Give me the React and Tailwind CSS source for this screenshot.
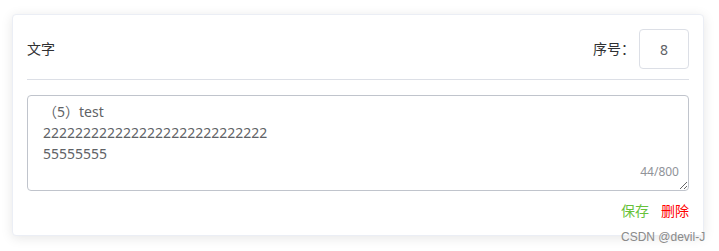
import React from "react";

export default function App() {
  const value = "（5）test\n2222222222222222222222222222\n55555555";
  return (
    <div
      className="relative w-[719px] h-[251px] bg-white"
      style={{ fontFamily: '"Noto Sans", "Noto Sans CJK SC", sans-serif' }}
    >
      <div className="pt-[14px] pl-[12px]">
        <div className="w-[692px] h-[222px] bg-white rounded-[4px] border border-[#ebeef5] shadow-[0_2px_12px_0_rgba(0,0,0,0.1)] px-[14px] pt-[14px] flex flex-col">
          <div className="flex items-center justify-between h-[40px]">
            <span className="text-[14px] text-[#303133] leading-[20px]">文字</span>
            <div className="flex items-center gap-[4px]">
              <span className="text-[14px] text-[#303133] leading-[20px]">序号：</span>
              <div className="w-[50px] h-[40px] border border-[#dcdfe6] rounded-[4px] flex items-center justify-center text-[14px] text-[#606266]">
                8
              </div>
            </div>
          </div>
          <div className="mt-[10px] h-px bg-[#dcdfe6]" />
          <div className="relative mt-[15px] h-[96px]">
            <textarea
              defaultValue={value}
              className="block w-full h-[96px] resize-y border border-[#c0c4cc] rounded-[4px] px-[15px] py-[5px] text-[14px] leading-[21px] text-[#606266] outline-none"
            />
            <span className="absolute right-[10px] bottom-[13px] text-[12px] leading-[12px] text-[#909399] bg-white">
              44/800
            </span>
          </div>
          <div className="mt-[10px] flex justify-end gap-[12px] text-[14px] leading-[20px]">
            <span className="text-[#67c23a]">保存</span>
            <span className="text-[#ff0000]">删除</span>
          </div>
        </div>
      </div>
      <span
        className="absolute left-[621px] top-[230px] text-[12px] leading-[14px] text-[#8a8a8a]"
        style={{ fontFamily: '"Liberation Sans", sans-serif' }}
      >
        CSDN @devil-J
      </span>
    </div>
  );
}
